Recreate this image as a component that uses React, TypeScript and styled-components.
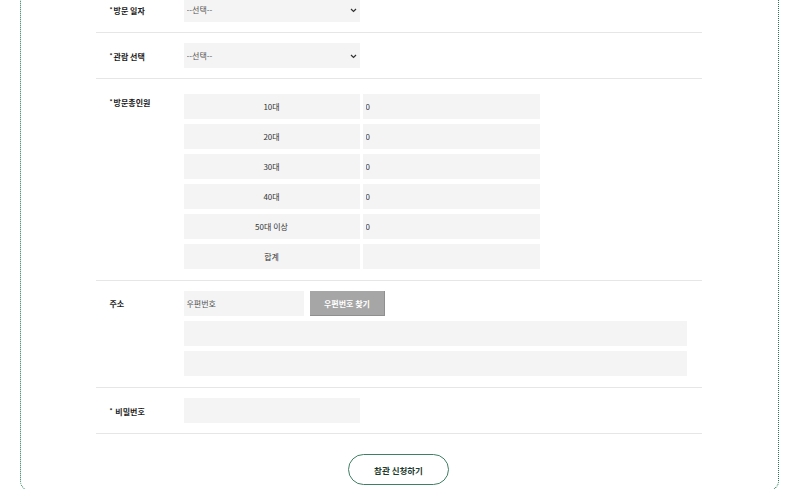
import React from "react";
import styled, { createGlobalStyle } from "styled-components";

const Global = createGlobalStyle`
  html, body { margin: 0; padding: 0; background: #fff; overflow: hidden; }
  body { font-family: "Noto Sans CJK KR", "Noto Sans", sans-serif; color: #222; }
  * { box-sizing: border-box; }
`;

const Frame = styled.div`
  margin: -13px 21px 0 20px;
  height: 504px;
  border-left: 1px dotted #1f7a52;
  border-right: 1px dotted #1f7a52;
  border-bottom: 1px dotted #1f7a52;
  border-radius: 0 0 10px 10px;
  display: flex;
  flex-direction: column;
  align-items: center;
`;

const Form = styled.div`
  width: 606px;
  margin-left: -2px;
  display: flex;
  flex-direction: column;
`;

const Row = styled.div<{ $extra?: number }>`
  display: grid;
  grid-template-columns: 88px 1fr;
  padding: 10px 0 ${(p) => 10 + (p.$extra ?? 0)}px;
  border-bottom: 1px solid #e6e6e6;
`;

const Label = styled.div`
  padding-left: 14px;
  line-height: 25px;
  height: 25px;
  font-size: 8px;
  font-weight: 700;
  color: #1a1a1a;
  white-space: nowrap;
`;

const Star = styled.span`
  font-size: 6px;
  vertical-align: 2px;
  margin-right: 1px;
`;

const SelectWrap = styled.div`
  position: relative;
  width: 176px;
  height: 25px;
`;

const Select = styled.select`
  appearance: none;
  -webkit-appearance: none;
  display: block;
  margin: 0;
  width: 100%;
  height: 25px;
  border: none;
  outline: none;
  background: #f4f4f4;
  padding: 0 3px;
  font-family: "Noto Sans CJK KR", "Noto Sans", sans-serif;
  font-size: 8px;
  color: #555;
`;

const Chevron = styled.svg`
  position: absolute;
  right: 3px;
  top: 11px;
  width: 7px;
  height: 5px;
  pointer-events: none;
`;

const CountGrid = styled.div`
  display: grid;
  grid-template-columns: 176px 177px;
  column-gap: 3px;
  row-gap: 5px;
  margin: 5px 0 1px 0;
`;

const HeadCell = styled.div`
  height: 25px;
  line-height: 25px;
  background: #f4f4f4;
  text-align: center;
  font-size: 8px;
  color: #333;
`;

const ValueInput = styled.input`
  display: block;
  margin: 0;
  height: 25px;
  width: 100%;
  border: none;
  outline: none;
  background: #f4f4f4;
  padding: 0 3px;
  font-family: "Noto Sans CJK KR", "Noto Sans", sans-serif;
  font-size: 8px;
  color: #333;
`;

const Stack = styled.div`
  display: flex;
  flex-direction: column;
  gap: 5px;
`;

const Line = styled.div`
  display: flex;
  gap: 6px;
`;

const Field = styled.input<{ $w: number }>`
  display: block;
  margin: 0;
  width: ${(p) => p.$w}px;
  height: 25px;
  border: none;
  outline: none;
  background: #f4f4f4;
  padding: 0 3px;
  font-family: "Noto Sans CJK KR", "Noto Sans", sans-serif;
  font-size: 8px;
  color: #333;
  &::placeholder { color: #555; }
`;

const GrayButton = styled.button`
  width: 75px;
  height: 25px;
  border: none;
  background: #a6a6a6;
  box-shadow: inset -1px -1px 0 #8f8f8f;
  color: #fff;
  font-family: "Noto Sans CJK KR", "Noto Sans", sans-serif;
  font-size: 8px;
  font-weight: 700;
  padding: 0;
`;

const Submit = styled.button`
  margin: 20px auto 0;
  width: 101px;
  height: 31px;
  border: 1px solid #3f7f64;
  border-radius: 16px;
  background: #fff;
  color: #1c3a2c;
  font-family: "Noto Sans CJK KR", "Noto Sans", sans-serif;
  font-size: 8.5px;
  font-weight: 700;
  padding: 0;
`;

const ChoiceSelect: React.FC = () => (
  <SelectWrap>
    <Select defaultValue="">
      <option value="">--선택--</option>
    </Select>
    <Chevron viewBox="0 0 7 5">
      <path d="M1 1 L3.5 3.5 L6 1" fill="none" stroke="#333" strokeWidth="1.2" />
    </Chevron>
  </SelectWrap>
);

const ages = ["10대", "20대", "30대", "40대", "50대 이상"];

export default function App() {
  return (
    <>
      <Global />
      <Frame>
        <Form>
          <Row>
            <Label><Star>*</Star>방문 일자</Label>
            <ChoiceSelect />
          </Row>
          <Row>
            <Label><Star>*</Star>관람 선택</Label>
            <ChoiceSelect />
          </Row>
          <Row>
            <Label><Star>*</Star>방문총인원</Label>
            <CountGrid>
              {ages.map((a) => (
                <React.Fragment key={a}>
                  <HeadCell>{a}</HeadCell>
                  <ValueInput readOnly defaultValue="0" />
                </React.Fragment>
              ))}
              <HeadCell>합계</HeadCell>
              <ValueInput readOnly defaultValue="" />
            </CountGrid>
          </Row>
          <Row $extra={1}>
            <Label>주소</Label>
            <Stack>
              <Line>
                <Field $w={120} placeholder="우편번호" />
                <GrayButton>우편번호 찾기</GrayButton>
              </Line>
              <Field $w={503} />
              <Field $w={503} />
            </Stack>
          </Row>
          <Row>
            <Label><Star>*</Star> 비밀번호</Label>
            <Field $w={176} type="password" />
          </Row>
          <Submit>참관 신청하기</Submit>
        </Form>
      </Frame>
    </>
  );
}
